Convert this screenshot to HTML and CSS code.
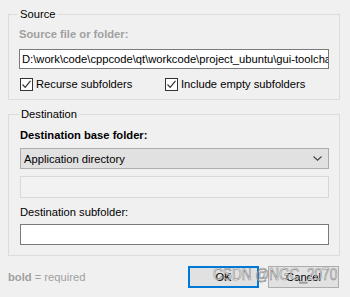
FILE: index.html
```html
<!DOCTYPE html>
<html>
<head>
<meta charset="utf-8">
<link rel="stylesheet" href="styles.css">
</head>
<body>
<div class="dialog">
  <fieldset class="group source">
    <legend>Source</legend>
    <div class="label bold disabled">Source file or folder:</div>
    <div class="input path">D:\work\code\cppcode\qt\workcode\project_ubuntu\gui-toolchain</div>
    <div class="checks">
      <label class="check first"><span class="box"><svg width="11" height="11" viewBox="0 0 11 11"><path d="M1.5 5.5 L4.2 8.3 L9.5 1.8" fill="none" stroke="#333" stroke-width="1.2"/></svg></span>Recurse subfolders</label>
      <label class="check"><span class="box"><svg width="11" height="11" viewBox="0 0 11 11"><path d="M1.5 5.5 L4.2 8.3 L9.5 1.8" fill="none" stroke="#333" stroke-width="1.2"/></svg></span>Include empty subfolders</label>
    </div>
  </fieldset>
  <fieldset class="group dest">
    <legend>Destination</legend>
    <div class="label bold">Destination base folder:</div>
    <div class="select"><span>Application directory</span><svg width="9" height="5" viewBox="0 0 9 5"><path d="M0.5 0.5 L4.5 4.2 L8.5 0.5" fill="none" stroke="#444" stroke-width="1.1"/></svg></div>
    <div class="input off"></div>
    <div class="label sub">Destination subfolder:</div>
    <div class="input empty"></div>
  </fieldset>
  <div class="footer">
    <div class="hint"><b>bold</b> = required</div>
    <div class="buttons">
      <button class="btn default">OK</button>
      <button class="btn">Cancel</button>
    </div>
    <span class="watermark">CSDN @NGC_2070</span>
  </div>
</div>
</body>
</html>
```
FILE: styles.css
```css
html, body {
  margin: 0;
  padding: 0;
  background: #f0f0f0;
}
body {
  font-family: "Liberation Sans", Arial, sans-serif;
  font-size: 11.2px;
  line-height: 16px;
  color: #000;
}
.dialog {
  padding: 6px 10px 0 8px;
}
.group {
  margin: 0;
  border: 1px solid #dcdcdc;
  padding: 0 10px 7px 10px;
  min-width: 0;
}
.group legend {
  padding: 0 2px;
  margin-left: -1px;
  line-height: 16px;
}
.label {
  margin-top: 4px;
}
.bold { font-weight: bold; }
.disabled { color: #a0a0a0; }
.input {
  box-sizing: border-box;
  height: 20px;
  border: 1px solid #7a7a7a;
  background: #fff;
  padding: 1px 2px;
  white-space: nowrap;
  overflow: hidden;
}
.path {
  margin-top: 7px;
}
.checks {
  display: flex;
  margin-top: 7px;
  height: 16px;
  align-items: center;
  padding-left: 1px;
}
.check {
  display: flex;
  align-items: center;
  gap: 3px;
  white-space: nowrap;
}
.check.first { width: 145px; }
.box {
  box-sizing: border-box;
  width: 13px;
  height: 13px;
  border: 1px solid #333;
  background: #fff;
  display: flex;
}
.box svg { display: block; }
.dest {
  margin-top: 6px;
  padding: 0 10px 10px 11px;
}
.dest .label.bold { margin-top: 5px; }
.select {
  box-sizing: border-box;
  margin-top: 5px;
  height: 21px;
  border: 1px solid #adadad;
  background: #e1e1e1;
  display: flex;
  align-items: center;
  justify-content: space-between;
  padding: 0 6px 0 3px;
}
.select svg { display: block; }
.input.off {
  margin-top: 7px;
  height: 22px;
  border-color: #d8d8d8;
  background: #f2f2f2;
}
.label.sub { margin-top: 6px; }
.input.empty {
  margin-top: 4px;
  height: 21px;
}
.footer {
  position: relative;
  display: flex;
  justify-content: space-between;
  align-items: center;
  margin-top: 10px;
}
.hint {
  color: #a0a0a0;
}
.hint b { font-weight: bold; }
.buttons {
  display: flex;
  gap: 9px;
  margin-right: 1px;
}
.btn {
  box-sizing: border-box;
  width: 71px;
  height: 22px;
  border: 1px solid #adadad;
  background: #e1e1e1;
  font-family: "Liberation Sans", Arial, sans-serif;
  font-size: 11.2px;
  color: #000;
  padding: 0;
}
.btn.default {
  border: 2px solid #0078d7;
}
.watermark {
  position: absolute;
  right: 3px;
  top: 1px;
  font-family: "Liberation Sans", sans-serif;
  font-size: 17px;
  color: rgba(255,255,255,0.7);
  -webkit-text-stroke: 0.7px rgba(100,100,100,0.75);
  transform: scaleX(0.8);
  transform-origin: right center;
  pointer-events: none;
  white-space: nowrap;
}
```
